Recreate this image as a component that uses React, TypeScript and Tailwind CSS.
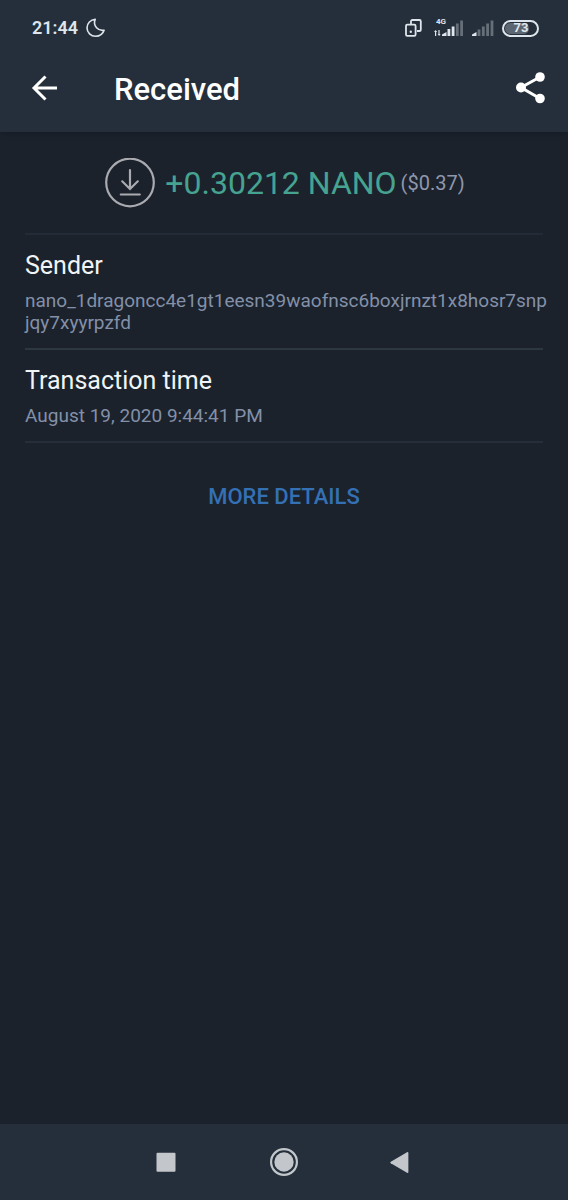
const details = [
  {
    label: "Sender",
    value: "nano_1dragoncc4e1gt1eesn39waofnsc6boxjrnzt1x8hosr7snpjqy7xyyrpzfd",
    border: "border-[#2d3742]"
  },
  {
    label: "Transaction time",
    value: "August 19, 2020 9:44:41 PM",
    border: "border-[#252e39]"
  }
]

function StatusBar() {
  return (
    <div className="flex h-14 items-center justify-between pl-8 pr-[29px] text-[#dfe5ec]">
      <div className="flex items-center gap-2">
        <span className="text-lg font-semibold">21:44</span>
        <svg className="h-5 w-5" viewBox="0 0 20 20" fill="none" stroke="currentColor" strokeWidth="1.6" strokeLinejoin="round">
          <path d="M9.2 1.2C4.6 1.6 1 5.3 1 9.8C1 14.6 4.9 18.2 9.6 18.2C13.6 18.2 16.9 15.8 18.1 12.2C12.5 13.2 6.6 8.2 9.2 1.2Z" />
        </svg>
      </div>

      <div className="flex items-center">
        <svg className="mr-3 h-[18px] w-[17px]" viewBox="0 0 17 18" fill="none" stroke="currentColor" strokeWidth="1.8">
          <path d="M6 5V2.3a1.3 1.3 0 0 1 1.3-1.3h7.2A1.3 1.3 0 0 1 15.8 2.3v8.4a1.3 1.3 0 0 1-1.3 1.3H12" />
          <rect x="1" y="5.6" width="9.6" height="11.2" rx="1.3" />
          <circle cx="5.8" cy="12.8" r="1.2" fill="currentColor" stroke="none" />
        </svg>
        <div className="relative mr-2">
          <span className="absolute left-[2px] -top-px text-[8px] font-bold leading-[8px]">4G</span>
          <svg className="h-[18px] w-[30px]" viewBox="0 0 30 18" fill="currentColor">
            <path d="M0 13L1.6 11L3.2 13H2.2V17H1V13ZM3.6 15H4.4V11H5.6V15H6.6L5.1 17Z" />
            <path d="M8 17v-1.5l4.5-2.5v4z" />
            <rect x="13.5" y="10" width="2.8" height="7" />
            <rect x="17.7" y="7.5" width="2.8" height="9.5" />
            <g opacity="0.35">
              <rect x="21.9" y="4.5" width="2.8" height="12.5" />
              <rect x="26.2" y="1.5" width="2.8" height="15.5" />
            </g>
          </svg>
        </div>
        <svg className="mr-2 h-[18px] w-[22px]" viewBox="0 0 22 18" fill="currentColor">
          <path d="M0 17v-1.5l4.5-2.5v4z" />
          <g opacity="0.35">
            <rect x="5.6" y="10.5" width="2.8" height="6.5" />
            <rect x="9.9" y="7.5" width="2.8" height="9.5" />
            <rect x="14.2" y="4.5" width="2.8" height="12.5" />
            <rect x="18.6" y="1.5" width="2.8" height="15.5" />
          </g>
        </svg>
        <div className="h-[17px] w-[37px] rounded-full border-2 border-current p-px">
          <div className="flex h-full w-6 items-center justify-center rounded-full bg-[#5b6672] pl-2 text-[13px] font-bold">73</div>
        </div>
      </div>
    </div>
  )
}

function AppBar() {
  return (
    <div className="flex h-[76px] items-center pb-3 pl-7 pr-[21px] text-white">
      <button aria-label="Back" className="mr-[54px]">
        <svg className="h-8 w-8" viewBox="0 0 32 32" fill="none" stroke="currentColor" strokeWidth="3">
          <path d="M29 16H6M17.5 4.5L6 16L17.5 27.5" />
        </svg>
      </button>
      <h1 className="flex-1 pt-1 text-[31px] font-medium leading-9">Received</h1>
      <button aria-label="Share">
        <svg className="h-8 w-8" viewBox="0 0 32 32" fill="currentColor" stroke="currentColor">
          <path d="M25 5L6 15.5L25 26.5" fill="none" strokeWidth="3" />
          <circle cx="25" cy="5" r="4.8" stroke="none" />
          <circle cx="6" cy="15.5" r="5" stroke="none" />
          <circle cx="25" cy="26.5" r="4.8" stroke="none" />
        </svg>
      </button>
    </div>
  )
}

function NavBar() {
  return (
    <nav className="flex h-[76px] items-center justify-center gap-[90px] bg-[#242f3b] text-[#c3c7cb]">
      <button aria-label="Recent apps">
        <svg className="h-7 w-7" viewBox="0 0 28 28" fill="currentColor">
          <rect x="4.5" y="4.8" width="19" height="19" rx="1" />
        </svg>
      </button>
      <button aria-label="Home">
        <svg className="h-7 w-7" viewBox="0 0 28 28" fill="currentColor">
          <circle cx="14" cy="14" r="12.9" fill="none" stroke="currentColor" strokeWidth="2.2" />
          <circle cx="14" cy="14" r="9.7" />
        </svg>
      </button>
      <button aria-label="Back">
        <svg className="h-7 w-7" viewBox="0 0 28 28" fill="currentColor">
          <path d="M2.8 13.7L19 4.2Q20.4 3.7 20.4 5.1V23.9Q20.4 25.3 19 24.8L2.8 15.3Q1.6 14.5 2.8 13.7Z" />
        </svg>
      </button>
    </nav>
  )
}

export default function App() {
  return (
    <div className="flex min-h-screen flex-col bg-[#1b222c] font-['Roboto',sans-serif]">
      <header className="bg-[#242f3b] shadow-md">
        <StatusBar />
        <AppBar />
      </header>

      <main className="flex-1 px-[25px]">
        <div className="flex h-[103px] items-center justify-center border-b-2 border-[#232b36] pl-0.5">
          <svg className="mr-2.5 h-[50px] w-[50px] text-[#a9abb0]" viewBox="0 0 50 50" fill="none" stroke="currentColor" strokeWidth="2.2" strokeLinecap="round">
            <circle cx="25" cy="24.5" r="23.8" />
            <path d="M25 12V30.5M17.2 23.3L25 31L32.8 23.3M15.8 36.5H34.8" />
          </svg>
          <span className="text-[32px] leading-10 text-[#46a391]">+0.30212 NANO</span>
          <span className="ml-1 text-xl text-[#8f97ac]">($0.37)</span>
        </div>

        <dl>
          {details.map((item) => (
            <div key={item.label} className={`border-b-2 pt-[15px] pb-[14px] ${item.border}`}>
              <dt className="text-[25px] leading-8 text-[#f1f4f6]">{item.label}</dt>
              <dd className="-mr-1.5 mt-2 break-all text-[19px] leading-[22px] text-[#8390a8]">{item.value}</dd>
            </div>
          ))}
        </dl>

        <div className="mt-9 text-center">
          <button className="px-4 py-1 text-[22px] font-medium leading-7 text-[#3470b4]">MORE DETAILS</button>
        </div>
      </main>

      <NavBar />
    </div>
  )
}
